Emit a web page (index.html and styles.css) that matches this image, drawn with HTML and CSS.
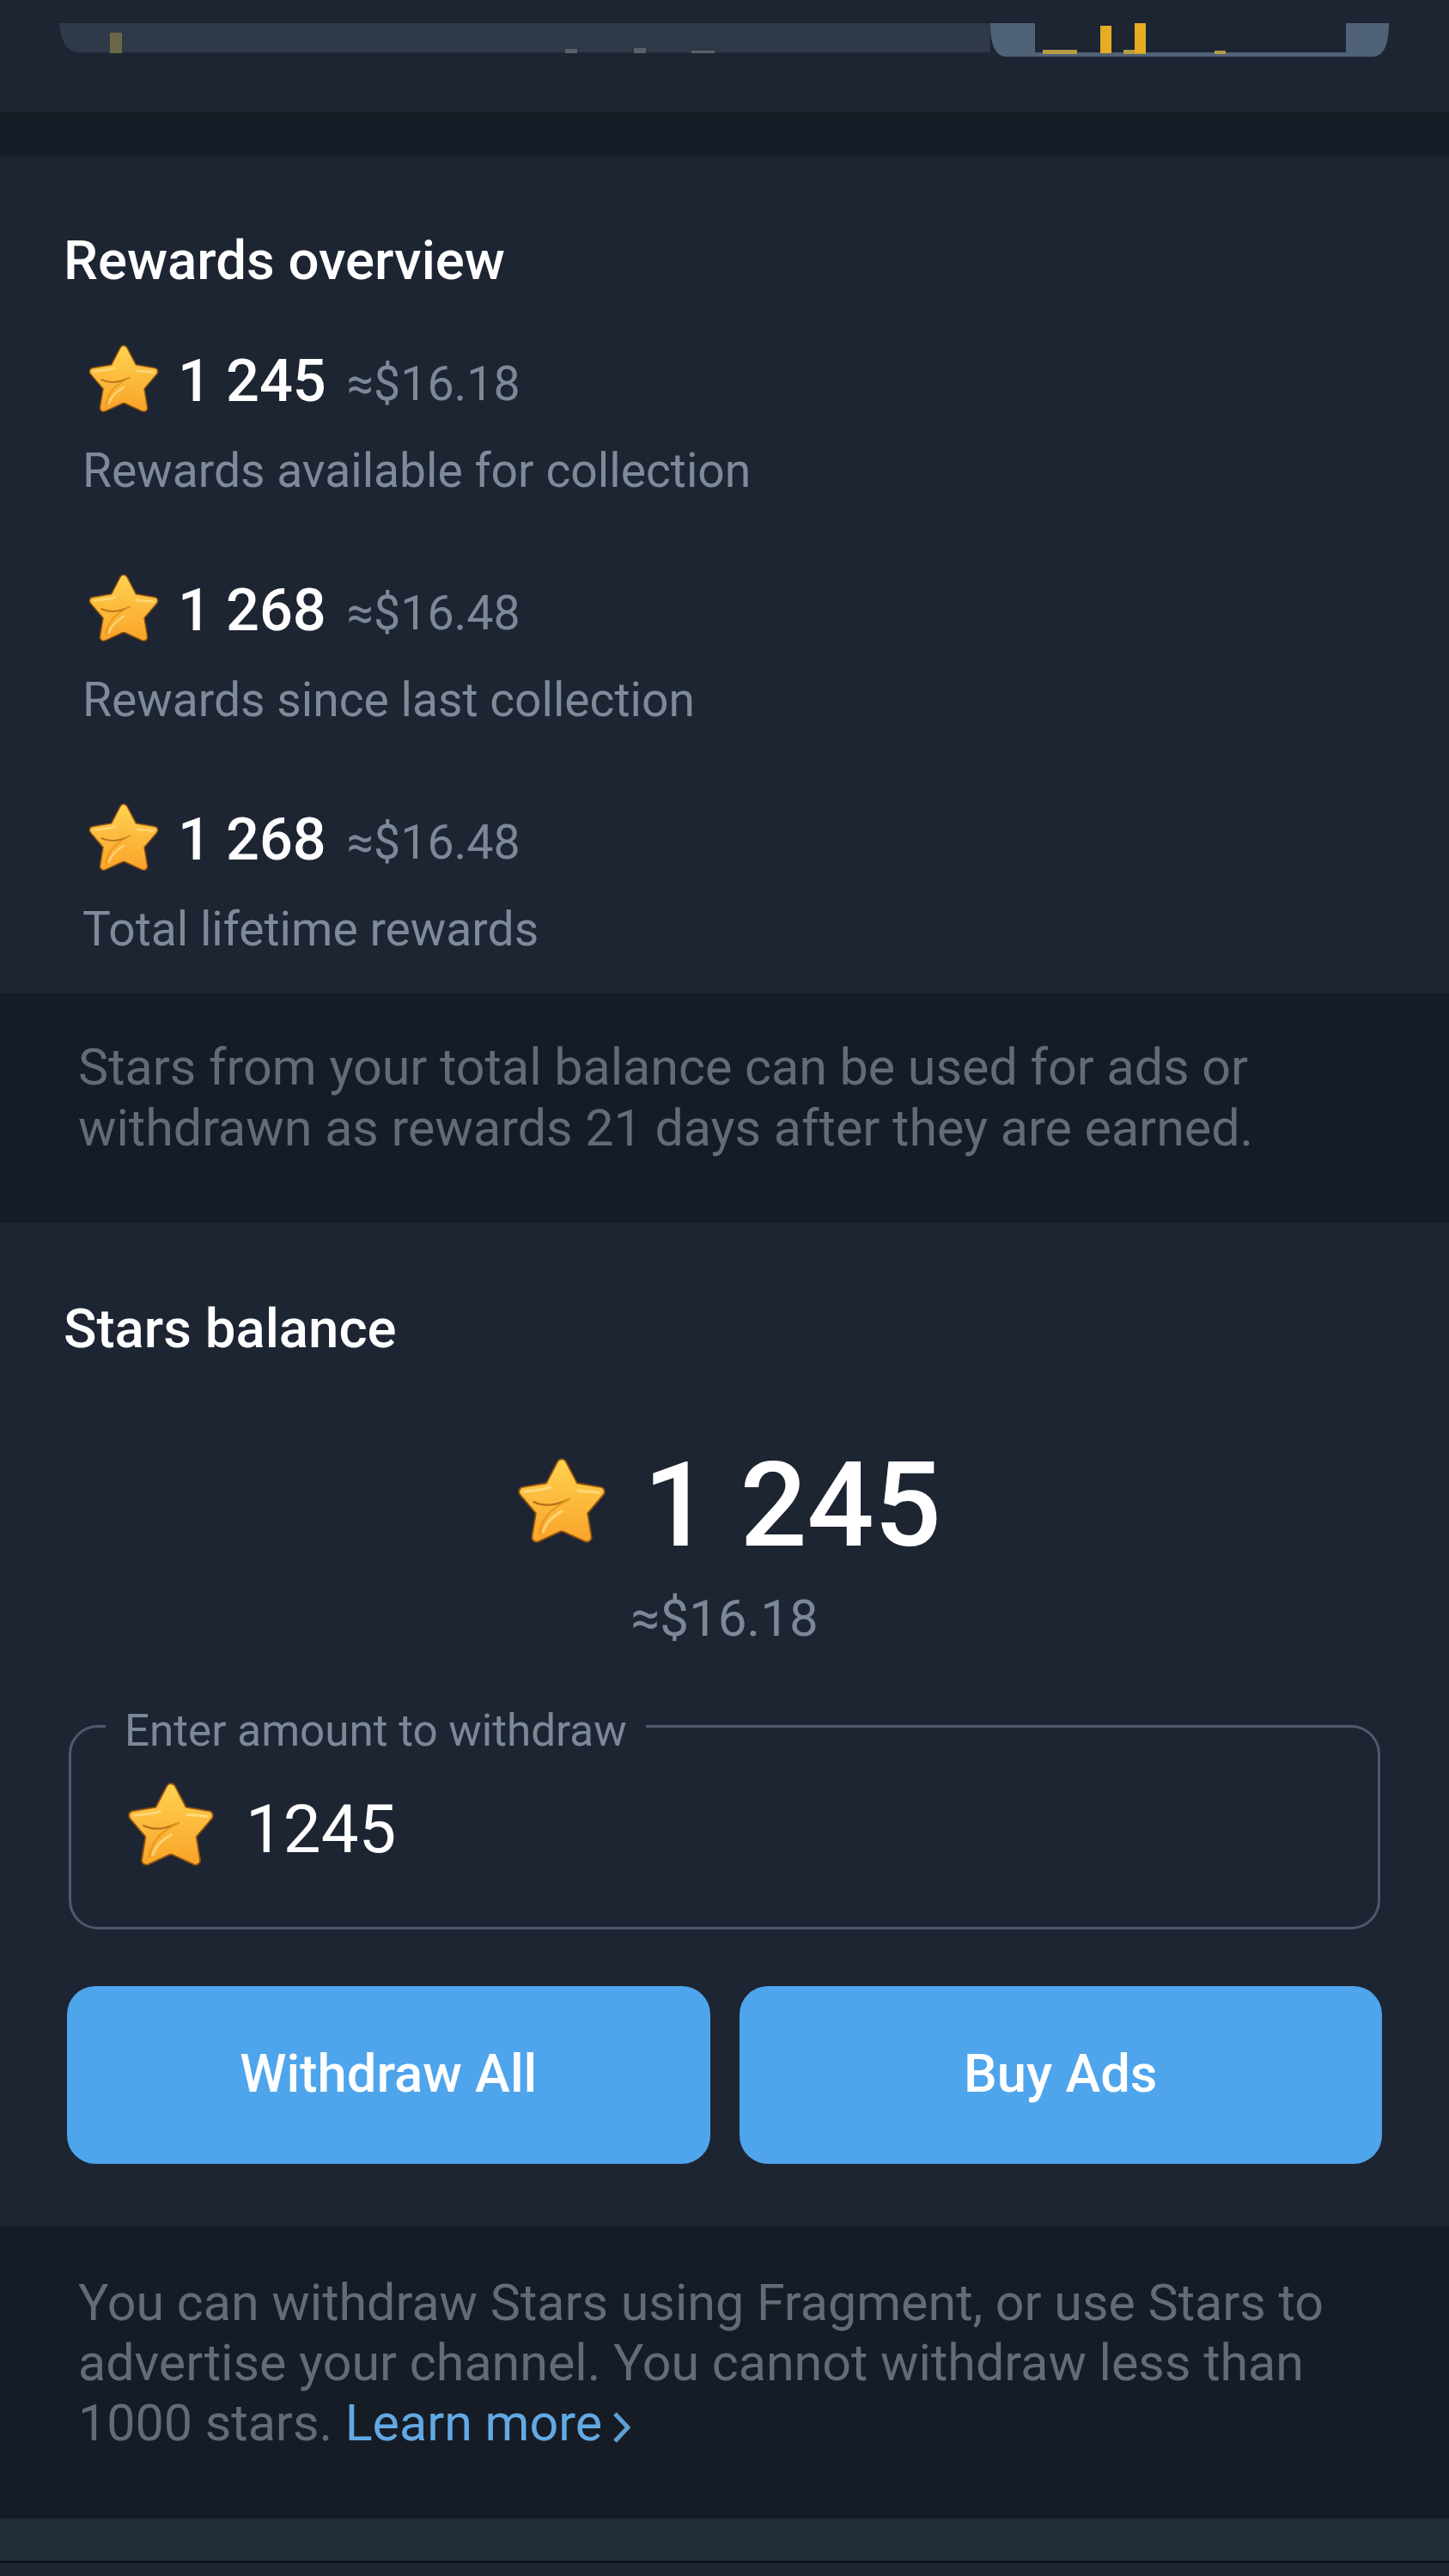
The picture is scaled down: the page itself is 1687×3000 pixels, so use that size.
FILE: index.html
```html
<!DOCTYPE html>
<html lang="en">
<head>
<meta charset="utf-8">
<title>Stars balance</title>
<link rel="stylesheet" href="styles.css">
</head>
<body>
<svg class="defs" width="0" height="0" aria-hidden="true">
  <defs>
    <linearGradient id="starFill" x1="0" y1="0" x2="0" y2="1">
      <stop offset="0" stop-color="#ffcf4f"/>
      <stop offset="1" stop-color="#f9a62b"/>
    </linearGradient>
    <symbol id="star" viewBox="0 0 100 96">
      <path class="star-edge" d="M50 9 L62 32 Q64 35 67 35 L91 39 L74 59 Q72 61 73 64 L77 88 L53 77 Q50 76 47 77 L23 88 L27 64 Q28 61 26 59 L9 39 L33 35 Q36 35 38 32 Z"/>
      <path class="star-body" fill="url(#starFill)" d="M50 9 L62 32 Q64 35 67 35 L91 39 L74 59 Q72 61 73 64 L77 88 L53 77 Q50 76 47 77 L23 88 L27 64 Q28 61 26 59 L9 39 L33 35 Q36 35 38 32 Z"/>
      <path class="star-cut" d="M20 50 C32 56 46 53 58 47"/>
      <path class="star-fold" d="M58 47 C44 55 30 62 26 84"/>
      <path class="star-shine" d="M10 39 C20 37 30 38 38 34 M30 82 C33 72 40 66 50 60 M68 38 C76 39 84 39 90 40"/>
    </symbol>
  </defs>
</svg>

<main class="page">
  <section class="panel chart-panel">
    <svg class="overview" viewBox="0 0 1687 130" aria-hidden="true">
      <path class="track" d="M69 27 H1153 V61 H92 Q72 61 69 27 Z"/>
      <path class="thumb" d="M1153 27 H1205 V61 H1567 V27 H1617 C1617 50 1612 66 1598 66 H1172 C1158 66 1153 50 1153 27 Z"/>
      <rect class="bar-dim" x="128" y="38" width="14" height="24"/>
      <rect class="bar-grey" x="658" y="57" width="14" height="5"/>
      <rect class="bar-grey" x="738" y="56" width="14" height="6"/>
      <rect class="bar-grey" x="805" y="59" width="27" height="3"/>
      <rect class="bar-soft" x="1214" y="58" width="40" height="5"/>
      <rect class="bar-gold" x="1281" y="30" width="13" height="32"/>
      <rect class="bar-soft" x="1308" y="58" width="26" height="5"/>
      <rect class="bar-gold" x="1321" y="27" width="13" height="35"/>
      <rect class="bar-soft" x="1414" y="59" width="13" height="4"/>
    </svg>
  </section>
  <div class="gap-band"></div>

  <section class="panel rewards">
    <h2 class="title">Rewards overview</h2>
    <div class="reward">
      <div class="amount-line">
        <svg class="star star-small"><use href="#star"/></svg>
        <span class="amount">1 245</span>
        <span class="usd">≈$16.18</span>
      </div>
      <p class="label">Rewards available for collection</p>
    </div>
    <div class="reward">
      <div class="amount-line">
        <svg class="star star-small"><use href="#star"/></svg>
        <span class="amount">1 268</span>
        <span class="usd">≈$16.48</span>
      </div>
      <p class="label">Rewards since last collection</p>
    </div>
    <div class="reward">
      <div class="amount-line">
        <svg class="star star-small"><use href="#star"/></svg>
        <span class="amount">1 268</span>
        <span class="usd">≈$16.48</span>
      </div>
      <p class="label">Total lifetime rewards</p>
    </div>
  </section>
  <p class="note note-first">Stars from your total balance can be used for ads or withdrawn as rewards 21 days after they are earned.</p>

  <section class="panel balance">
    <h2 class="title">Stars balance</h2>
    <div class="total">
      <svg class="star star-large"><use href="#star"/></svg>
      <span class="total-value">1 245</span>
    </div>
    <p class="total-usd">≈$16.18</p>
    <div class="field">
      <span class="field-label">Enter amount to withdraw</span>
      <svg class="star star-field"><use href="#star"/></svg>
      <span class="field-value">1245</span>
    </div>
    <div class="actions">
      <button class="action" type="button">Withdraw All</button>
      <button class="action" type="button">Buy Ads</button>
    </div>
  </section>
  <p class="note note-second">You can withdraw Stars using Fragment, or use Stars to advertise your channel. You cannot withdraw less than 1000 stars. <a class="link" href="#">Learn more<svg class="chevron" viewBox="0 0 22 38" aria-hidden="true"><path d="M3 3 L18 19 L3 35"/></svg></a></p>
  <div class="foot-bar"></div>
  <div class="foot-line"></div>
</main>
</body>
</html>
```
FILE: styles.css
```css
* { box-sizing: border-box; }
html, body { margin: 0; padding: 0; background: #1d2533; }
body { font-family: Roboto, "Noto Sans", sans-serif; }
.defs { position: absolute; }
.page { width: 1687px; height: 3000px; overflow: hidden; display: flex; flex-direction: column; }
.panel { background: #1d2533; }

.chart-panel { height: 130px; }
.overview { display: block; width: 1687px; height: 130px; }
.track { fill: #2f3948; }
.thumb { fill: #4f6278; }
.bar-dim { fill: #6b6748; }
.bar-grey { fill: #5c6068; }
.bar-gold { fill: #e5ac24; }
.bar-soft { fill: #b79a45; }
.gap-band { height: 51px; background: #161c25; }

.title { margin: 0; font-size: 63.5px; line-height: 70px; font-weight: 500; color: #fff; padding: 2px 0 0 74px; }
.rewards { height: 976px; padding-top: 86px; }
.reward { padding-top: 64px; padding-left: 96px; margin-bottom: 23px; }
.amount-line { display: flex; align-items: center; height: 80px; }
.star { display: block; flex: none; }
.star-edge { fill: #8f5210; stroke: #8f5210; stroke-width: 12; stroke-linejoin: round; }
.star-body { stroke: url(#starFill); stroke-width: 8.5; stroke-linejoin: round; }
.star-cut { fill: none; stroke: #b8741a; stroke-width: 2.2; stroke-linecap: round; }
.star-fold { fill: none; stroke: #e8981f; stroke-width: 2; stroke-linecap: round; }
.star-shine { fill: none; stroke: #ffe79a; stroke-width: 3; stroke-linecap: round; opacity: .6; }
.star-small { width: 86px; height: 83px; margin-left: 5px; margin-top: -6px; }
.amount { margin-left: 20px; font-size: 68.5px; line-height: 80px; font-weight: 500; color: #fff; margin-top: 2px; }
.usd { margin-left: 24px; font-size: 55.5px; line-height: 80px; color: #7d8897; margin-top: 10px; }
.label { margin: 30px 0 0; font-size: 55.2px; line-height: 70px; color: #7f8a99; }

.note { margin: 0; background: #161c25; font-size: 59.2px; line-height: 71px; color: #636b78; padding-left: 91px; padding-right: 80px; }
.note-first { height: 267px; padding-top: 50px; }
.note-second { height: 340px; padding-top: 54px; line-height: 70px; }
.link { color: #62a9e4; text-decoration: none; }
.chevron { width: 22px; height: 38px; margin-left: 12px; vertical-align: -4px; }
.chevron path { fill: none; stroke: #5f9fd3; stroke-width: 5; }

.balance { height: 1169px; padding-top: 87px; }
.total { display: flex; justify-content: center; align-items: center; height: 140px; margin-top: 97px; padding-left: 9px; }
.star-large { width: 108px; height: 104px; margin-right: 41px; margin-top: -6px; }
.total-value { font-size: 137.5px; line-height: 140px; font-weight: 500; color: #fff; position: relative; top: 3px; }
.total-usd { margin: 30px 0 0; text-align: center; font-size: 60px; line-height: 70px; color: #7d8897; }

.field { position: relative; display: flex; align-items: center; margin: 89px 80px 0; height: 238px; border: 3px solid #4e5a6b; border-radius: 34px; padding-left: 63px; }
.field-label { position: absolute; top: -24px; left: 40px; padding: 0 22px; background: #1d2533; font-size: 51.2px; line-height: 56px; color: #7d8897; }
.star-field { width: 106px; height: 102px; margin-top: -8px; }
.field-value { margin-left: 34px; font-size: 78px; line-height: 90px; color: #fff; position: relative; top: 3px; }

.actions { display: flex; gap: 34px; margin: 66px 78px 0; }
.action { flex: 1; height: 207px; padding-bottom: 4px; border: 0; border-radius: 33px; background: #4fa5ec; color: #fff; font-family: inherit; font-size: 61.5px; font-weight: 500; }

.foot-bar { height: 49px; background: #222c38; }
.foot-line { height: 3px; background: #0e131c; }
```
